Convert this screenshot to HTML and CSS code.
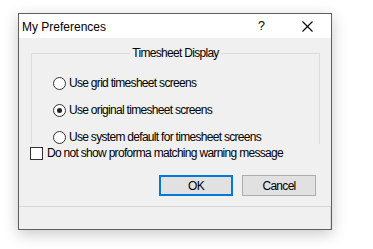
FILE: index.html
```html
<!DOCTYPE html>
<html>
<head>
<meta charset="utf-8">
<link rel="stylesheet" href="styles.css">
</head>
<body>
<div class="window">
  <div class="titlebar">
    <span class="title">My Preferences</span>
    <span class="help">?</span>
    <span class="close">
      <svg width="11" height="11" viewBox="0 0 11 11"><path d="M0.5 0.5 L10.5 10.5 M10.5 0.5 L0.5 10.5" stroke="#000" stroke-width="1.1" fill="none"/></svg>
    </span>
  </div>
  <div class="client">
    <div class="group">
      <div class="legend"><span>Timesheet Display</span></div>
      <div class="radios">
        <label class="opt"><span class="radio"></span><span>Use grid timesheet screens</span></label>
        <label class="opt"><span class="radio on"></span><span>Use original timesheet screens</span></label>
        <label class="opt"><span class="radio"></span><span>Use system default for timesheet screens</span></label>
      </div>
    </div>
    <label class="check"><span class="box"></span><span>Do not show proforma matching warning message</span></label>
    <div class="buttons">
      <div class="btn default">OK</div>
      <div class="btn">Cancel</div>
    </div>
    <div class="statusbar"></div>
  </div>
</div>
</body>
</html>
```

FILE: styles.css
```css
html, body {
  margin: 0;
  padding: 0;
  background: #ffffff;
}
body {
  width: 373px;
  height: 249px;
  padding: 13px 0 0 18px;
  box-sizing: border-box;
  font-family: "Liberation Sans", Arial, sans-serif;
  font-size: 12px;
  letter-spacing: -0.7px;
  color: #000;
}
.window {
  width: 314px;
  height: 217px;
  box-sizing: border-box;
  border: 1px solid #5f5f5f;
  background: #f0f0f0;
  box-shadow: 0 4px 14px rgba(0,0,0,0.22);
  display: flex;
  flex-direction: column;
}
.titlebar {
  height: 24px;
  background: #ffffff;
  display: flex;
  align-items: center;
  flex-shrink: 0;
  letter-spacing: 0;
}
.title {
  font-size: 12px;
  margin-left: 3px;
  margin-top: 1px;
  flex: 1;
}
.help {
  font-size: 12.5px;
  width: 12px;
  margin-right: 32px;
}
.close {
  width: 11px;
  height: 11px;
  margin-right: 18px;
  display: flex;
}
.client {
  flex: 1;
  display: flex;
  flex-direction: column;
  position: relative;
}
.group {
  margin: 15px 11px 0 12px;
  height: 90px;
  border: 1px solid #dcdcdc;
  border-bottom: none;
  position: relative;
}
.legend {
  display: flex;
  justify-content: center;
  margin-top: -8px;
  height: 14px;
}
.legend span {
  background: #f0f0f0;
  padding: 0 2px 0 2px;
  line-height: 14px;
}
.radios {
  display: flex;
  flex-direction: column;
  gap: 13px;
  margin: 16px 0 0 21px;
}
.opt {
  display: flex;
  align-items: center;
  height: 14px;
  gap: 3px;
}
.radio {
  width: 11px;
  height: 11px;
  border: 1px solid #333;
  border-radius: 50%;
  background: #fff;
  position: relative;
  flex-shrink: 0;
}
.radio.on::after {
  content: "";
  position: absolute;
  left: 3px;
  top: 3px;
  width: 5px;
  height: 5px;
  border-radius: 50%;
  background: #222;
}
.check {
  display: flex;
  align-items: center;
  gap: 4px;
  margin: 2px 0 0 11px;
  height: 14px;
  background: #f0f0f0;
  position: relative;
}
.box {
  width: 11px;
  height: 11px;
  border: 1px solid #333;
  background: #fff;
  flex-shrink: 0;
}
.buttons {
  display: flex;
  justify-content: flex-end;
  gap: 9px;
  margin: 15px 15px 0 0;
}
.btn {
  width: 74px;
  height: 21px;
  box-sizing: border-box;
  border: 1px solid #adadad;
  background: #e1e1e1;
  display: flex;
  align-items: center;
  justify-content: center;
}
.btn.default {
  border: 2px solid #0078d7;
}
.statusbar {
  margin-top: 10px;
  flex: 1;
  border-top: 1px solid #d7d7d7;
  border-right: 1px solid #dadada;
}
```
